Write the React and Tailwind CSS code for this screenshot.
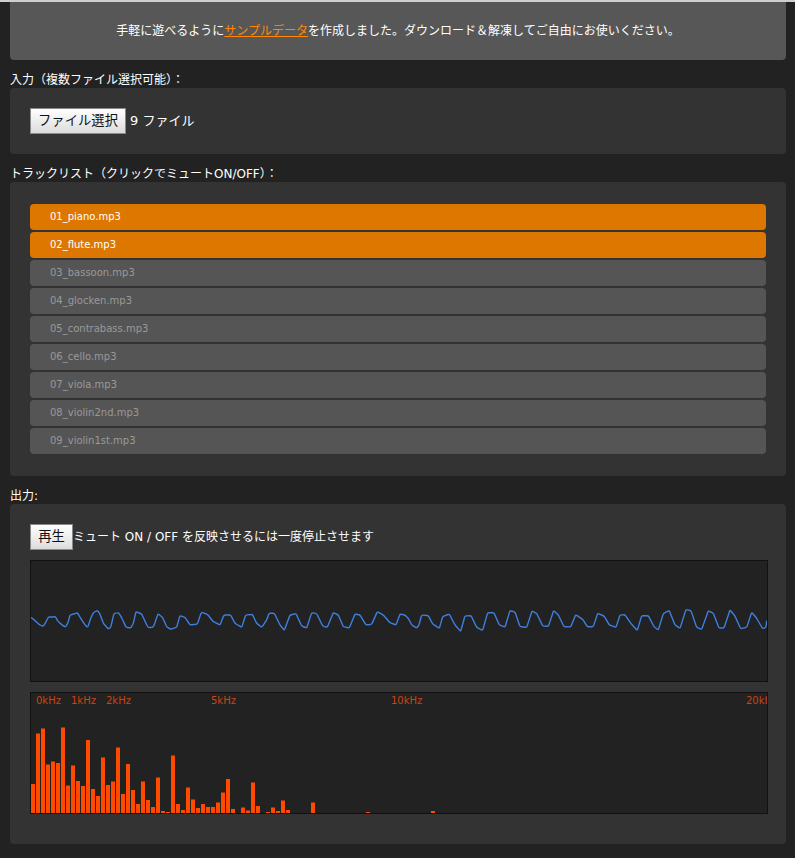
const tracks = [
  { name: '01_piano.mp3', on: true },
  { name: '02_flute.mp3', on: true },
  { name: '03_bassoon.mp3', on: false },
  { name: '04_glocken.mp3', on: false },
  { name: '05_contrabass.mp3', on: false },
  { name: '06_cello.mp3', on: false },
  { name: '07_viola.mp3', on: false },
  { name: '08_violin2nd.mp3', on: false },
  { name: '09_violin1st.mp3', on: false },
];

// traced from the 3x crops: [x, y]
const waveLeft = [[93,382],[105,392],[118,404],[130,409],[138,395],[145,381],[158,381],[165,379],[175,395],[190,408],[197,411],[205,395],[210,375],[225,371],[232,368],[242,385],[255,405],[263,412],[272,385],[280,368],[292,361],[300,372],[310,400],[325,417],[332,412],[342,370],[356,368],[366,385],[378,412],[392,414],[400,400],[408,365],[425,372],[438,400],[445,413],[460,411],[466,395],[474,371],[488,383],[500,410],[512,418],[530,412],[540,377],[556,383],[570,405],[592,402],[604,367],[622,373],[640,395],[660,405],[672,375],[692,375],[705,400],[725,412],[737,375],[757,373],[770,400],[785,412],[800,390],[807,370],[823,370],[840,405],[853,421],[870,375],[888,371],[905,408],[920,414],[935,368],[950,371],[968,408],[982,412],[1000,368],[1015,375],[1030,410],[1048,414],[1065,372],[1080,375],[1098,405],[1115,403],[1132,365],[1150,375],[1170,398],[1188,405]];
const waveRight = [[0,192],[15,195],[25,205],[35,225],[50,234],[57,225],[65,195],[85,197],[98,222],[118,235],[128,200],[148,192],[165,225],[182,244],[195,198],[213,197],[230,232],[248,241],[263,188],[282,188],[298,225],[315,231],[330,182],[345,186],[360,230],[380,232],[396,183],[410,190],[428,228],[445,229],[461,182],[475,195],[492,230],[512,231],[527,194],[548,208],[562,230],[580,230],[593,190],[612,198],[628,225],[648,232],[660,195],[675,194],[692,220],[712,241],[725,197],[745,197],[762,230],[775,240],[790,190],[808,182],[825,225],[840,235],[858,178],[873,182],[890,232],[905,238],[925,182],[940,190],[957,234],[972,234],[990,180],[1005,198],[1022,236],[1040,232],[1055,187],[1070,205],[1088,236],[1098,232],[1100,212]];

const wavePoints = [
  ...waveLeft.map(([x, y]) => [x / 3 - 31, y / 3 - 71]),
  ...waveRight.map(([x, y]) => [369 + x / 3, y / 3 - 11]),
];

const towards = (a, b, dist) => {
  const len = Math.hypot(b[0] - a[0], b[1] - a[1]) || 1;
  const t = Math.min(dist / len, 0.5);
  return `${(a[0] + (b[0] - a[0]) * t).toFixed(1)} ${(a[1] + (b[1] - a[1]) * t).toFixed(1)}`;
};

// straight runs with small rounded corners, like the sampled line in the picture
const wavePath = wavePoints.reduce((d, p, i) => {
  const prev = wavePoints[i - 1];
  const next = wavePoints[i + 1];
  if (!prev) return `M${p[0].toFixed(1)} ${p[1].toFixed(1)}`;
  if (!next) return `${d} L${p[0].toFixed(1)} ${p[1].toFixed(1)}`;
  return `${d} L${towards(p, prev, 1.3)} Q${p[0].toFixed(1)} ${p[1].toFixed(1)} ${towards(p, next, 1.3)}`;
}, '');

const bars = [29,79.5,84.5,48.5,51.5,50,85.5,27.5,47.5,32,27,73,24,17,55.5,28,31.5,65.5,19,49,23,9,31.5,13,6,35.5,2,1,57.5,9,3,25.5,13.5,5,9,6,6,10.5,20.5,34,4,0,5.5,2.5,30.5,7,0,1,5.5,2,12.5,3,0,0,0,0,10.5];
const extraBars = [[67, 1], [80, 2]];

const labels = [
  { text: '0kHz', cls: 'left-[5px]' },
  { text: '1kHz', cls: 'left-[40px]' },
  { text: '2kHz', cls: 'left-[75px]' },
  { text: '5kHz', cls: 'left-[180px]' },
  { text: '10kHz', cls: 'left-[360px]' },
  { text: '20kHz', cls: 'left-[715px]' },
];

function Label({ children }) {
  return <p className="h-7 pt-3 text-xs leading-4 text-white">{children}</p>;
}

function FakeButton({ children, className }) {
  return (
    <button className={`h-[26px] border border-[#8a8a8a] bg-gradient-to-b from-[#ffffff] to-[#dcdcdc] text-[13.33px] text-[#111111] ${className}`}>
      {children}
    </button>
  );
}

export default function App() {
  return (
    <div className="h-[858px] overflow-hidden border-t-2 border-[#cfcfcf] bg-[#222222] pl-[10px] pr-[9px] font-['DejaVu_Sans','Noto_Sans_CJK_JP',sans-serif]">
      {/* Notice */}
      <div className="flex h-[58px] items-center justify-center rounded-b-sm bg-[#575757] text-xs text-white">
        <p>手軽に遊べるように<a href="#" className="text-[#ff8800] underline">サンプルデータ</a>を作成しました。ダウンロード＆解凍してご自由にお使いください。</p>
      </div>

      <Label>入力（複数ファイル選択可能）：</Label>
      <div className="flex h-[66px] items-center rounded-sm bg-[#333333] px-5">
        <FakeButton className="w-24">ファイル選択</FakeButton>
        <span className="ml-1 text-[13px] text-white">9 ファイル</span>
      </div>

      <Label>トラックリスト（クリックでミュートON/OFF）：</Label>
      <div className="flex flex-col gap-0.5 rounded-sm bg-[#333333] px-5 py-[22px]">
        {tracks.map((track) => (
          <div
            key={track.name}
            className={`flex h-[26px] items-center rounded-sm pb-0.5 pl-5 text-[10px] ${
              track.on ? 'bg-[#dd7700] text-white' : 'bg-[#555555] text-[#999999]'
            }`}
          >
            {track.name}
          </div>
        ))}
      </div>

      <Label>出力:</Label>
      <div className="flex h-[340px] flex-col rounded-sm bg-[#333333] px-5 pt-5">
        <div className="flex items-center">
          <FakeButton className="w-[43px]">再生</FakeButton>
          <span className="text-xs text-white">ミュート ON / OFF を反映させるには一度停止させます</span>
        </div>

        {/* Waveform */}
        <div className="mt-[10px] h-[122px] w-[738px] border border-[#111111] bg-[#222222]">
          <svg width="736" height="120" viewBox="0 0 736 120" className="block">
            <path d={wavePath} fill="none" stroke="#3f7fe0" strokeWidth="1.4" strokeLinejoin="round" />
          </svg>
        </div>

        {/* Spectrum */}
        <div className="relative mt-[10px] h-[122px] w-[738px] overflow-hidden border border-[#111111] bg-[#222222]">
          {labels.map((label) => (
            <span key={label.text} className={`absolute top-0.5 text-[10px] leading-3 text-[#cc4411] ${label.cls}`}>
              {label.text}
            </span>
          ))}
          <svg width="736" height="120" viewBox="0 0 736 120" className="block">
            {bars.map((h, i) => (
              <rect key={i} x={i * 5} y={120 - h} width="4" height={h} fill="#ff4a00" />
            ))}
            {extraBars.map(([i, h]) => (
              <rect key={i} x={i * 5} y={120 - h} width="4" height={h} fill="#ff4a00" />
            ))}
          </svg>
        </div>
      </div>
    </div>
  );
}
